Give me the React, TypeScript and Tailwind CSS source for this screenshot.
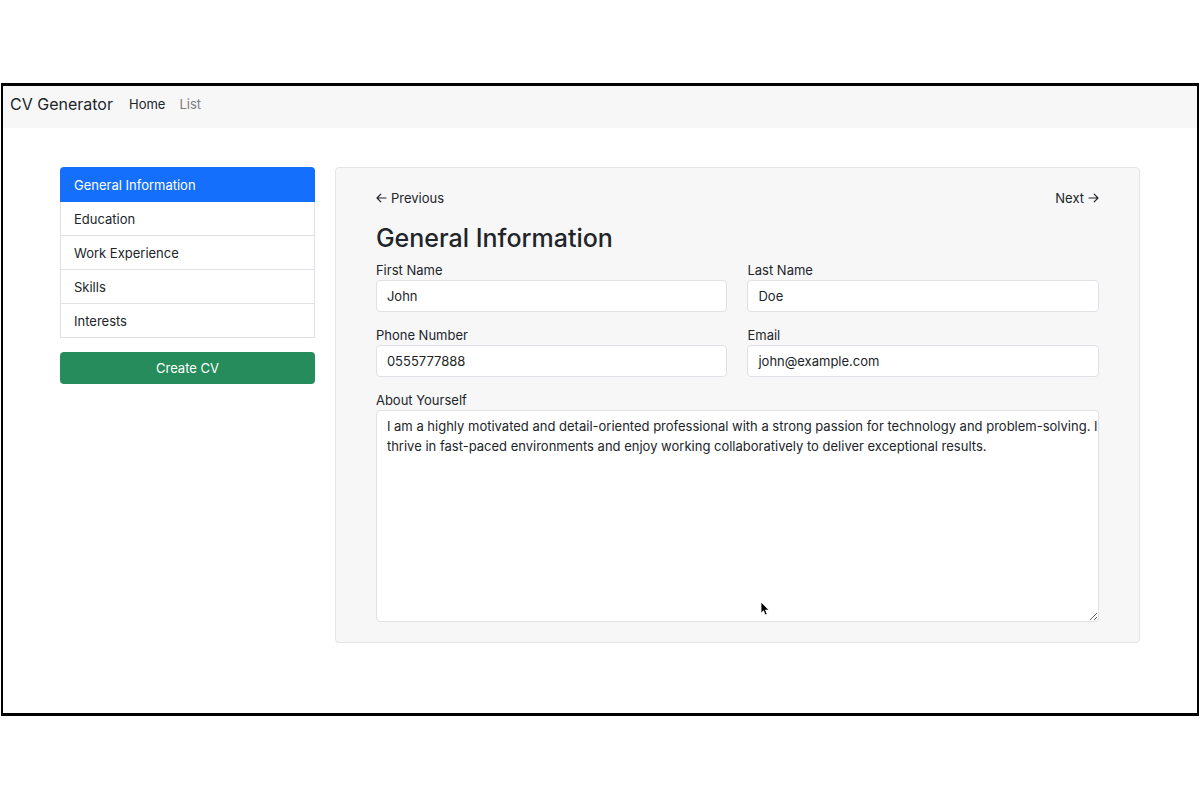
import type { ReactNode } from 'react';

const sections = ['General Information', 'Education', 'Work Experience', 'Skills', 'Interests'];

const about =
  'I am a highly motivated and detail-oriented professional with a strong passion for technology and problem-solving. I thrive in fast-paced environments and enjoy working collaboratively to deliver exceptional results.';

const controlClass =
  'block w-full rounded border border-[#dee2e6] bg-white py-[5px] pl-2.5 leading-5 text-[#212529] outline-none focus:border-[#86b7fe]';

function Field({ id, label, children }: { id: string; label: string; children: ReactNode }) {
  return (
    <div>
      <label htmlFor={id} className="block">
        {label}
      </label>
      {children}
    </div>
  );
}

function TextField({ id, label, type, value }: { id: string; label: string; type: string; value: string }) {
  return (
    <Field id={id} label={label}>
      <input id={id} type={type} defaultValue={value} className={controlClass} />
    </Field>
  );
}

function Arrow({ direction }: { direction: 'left' | 'right' }) {
  return (
    <svg
      viewBox="0 0 11 10"
      className="h-2.5 w-[11px]"
      fill="none"
      stroke="currentColor"
      strokeWidth="1.2"
      strokeLinecap="round"
      strokeLinejoin="round"
      aria-hidden="true"
    >
      <path d={direction === 'left' ? 'M10 5H1M4.8 1.2L1 5l3.8 3.8' : 'M1 5h9M6.2 1.2L10 5L6.2 8.8'} />
    </svg>
  );
}

export default function App() {
  return (
    <div className="min-h-screen bg-white px-px py-[83px] font-['Inter','Liberation_Sans',sans-serif] text-[13px] leading-5 text-[#212529]">
      <div className="relative border-x-2 border-y-[3px] border-black pb-[70px]">
        <nav className="flex items-center gap-4 bg-[#f7f7f8] px-[7px] pt-[3px] pb-[9px]">
          <a href="#home" className="text-base leading-[30px]">
            CV Generator
          </a>
          <div className="flex gap-3.5">
            <a href="#home">Home</a>
            <a href="#list" className="text-[#7b7c7e]">
              List
            </a>
          </div>
        </nav>

        <div className="grid items-start gap-5 px-4 pt-[39px] md:grid-cols-[19fr_60fr] md:px-[57px]">
          <aside>
            <ul>
              {sections.map((section, index) => (
                <li key={section}>
                  <button
                    type="button"
                    className={
                      index === 0
                        ? 'block w-full rounded-t bg-[#146ffd] px-3.5 pt-2 pb-[7px] text-left text-white'
                        : 'block w-full border-x border-b border-[#dee2e6] px-[13px] pt-[7px] pb-1.5 text-left'
                    }
                  >
                    {section}
                  </button>
                </li>
              ))}
            </ul>
            <button type="button" className="mt-3.5 block w-full rounded bg-[#268c5b] py-1.5 text-center text-white">
              Create CV
            </button>
          </aside>

          <main className="rounded border border-[#e2e4e6] bg-[#f7f7f8] px-4 py-5 md:px-10">
            <div className="flex justify-between">
              <button type="button" className="flex items-center gap-1">
                <Arrow direction="left" />
                Previous
              </button>
              <button type="button" className="flex items-center gap-1">
                Next
                <Arrow direction="right" />
              </button>
            </div>
            <h1 className="mt-3.5 mb-1.5 text-[25px] leading-8 font-medium">General Information</h1>
            <form className="grid gap-[13px]">
              <div className="grid gap-x-5 gap-y-[13px] sm:grid-cols-2">
                <TextField id="first-name" label="First Name" type="text" value="John" />
                <TextField id="last-name" label="Last Name" type="text" value="Doe" />
                <TextField id="phone" label="Phone Number" type="tel" value="0555777888" />
                <TextField id="email" label="Email" type="email" value="john@example.com" />
              </div>
              <Field id="about" label="About Yourself">
                <textarea id="about" rows={10} defaultValue={about} className={`${controlClass} resize-y`} />
              </Field>
            </form>
          </main>
        </div>

        <svg
          viewBox="0 0 10 16"
          className="pointer-events-none absolute top-[515px] left-[757px] h-4 w-2.5"
          aria-hidden="true"
        >
          <path
            d="M1 1v11.2l2.5-2.4 1.7 4.2 2-.8-1.7-4.1H9z"
            fill="#000"
            stroke="#fff"
            strokeWidth="0.8"
            strokeLinejoin="round"
          />
        </svg>
      </div>
    </div>
  );
}
